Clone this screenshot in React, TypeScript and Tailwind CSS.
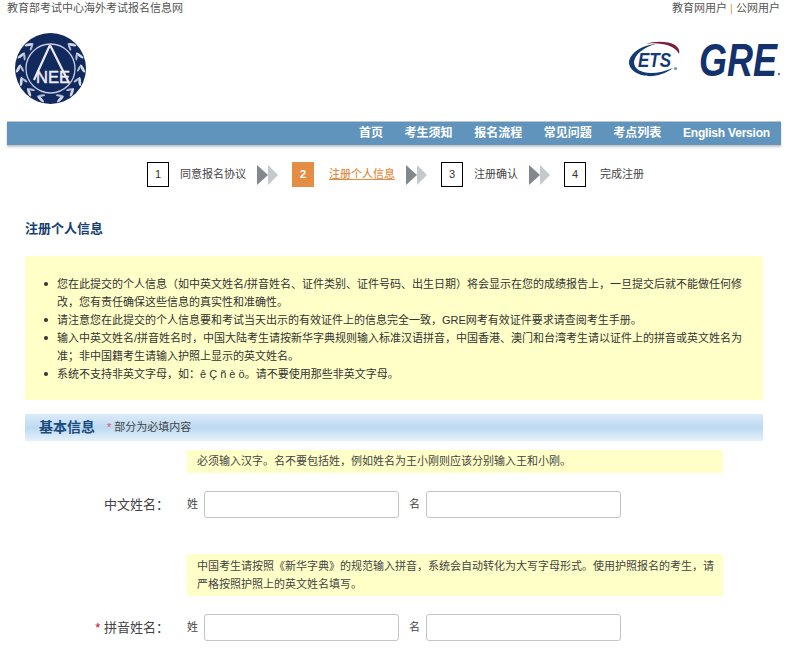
const FONT = "font-['Liberation_Sans','Noto_Sans_CJK_SC',sans-serif]";

const LAUREL = [18, 42, 66, 90, 114, 138];
const BULLET = "relative before:absolute before:top-[7px] before:left-[-13px] before:size-[4px] before:rounded-full before:bg-[#333] before:content-['']";

function NeeaLogo() {
  return (
    <svg width="71" height="71" viewBox="0 0 71 71" className="block">
      <circle cx="35.500" cy="35.500" r="35.500" fill="#12295e" />
      <circle cx="35.500" cy="35.500" r="24.500" fill="none" stroke="#c4cde0" strokeWidth="1.300" />
      {[0, 1].map((side) => (
        <g key={side} transform={side ? "translate(71 0) scale(-1 1)" : undefined}>
          {LAUREL.map((deg) => {
            const rad = (deg * Math.PI) / 180;
            const outX = 35.5 - 32 * Math.sin(rad);
            const outY = 35.5 + 32 * Math.cos(rad);
            const inX = 35.5 - 28.5 * Math.sin(rad);
            const inY = 35.5 + 28.5 * Math.cos(rad);
            return (
              <g key={deg}>
                <ellipse cx={outX} cy={outY} rx="4.500" ry="1.400" fill="#d3d9e6" transform={`rotate(${deg + 28} ${outX} ${outY})`} />
                <ellipse cx={inX} cy={inY} rx="3.500" ry="1.100" fill="#b4bed2" transform={`rotate(${deg - 28} ${inX} ${inY})`} />
              </g>
            );
          })}
        </g>
      ))}
      <path d="M35 12 L19 47 M35 12 L54 50" stroke="#e8ebf3" strokeWidth="2.200" fill="none" />
      <text x="38" y="50" textAnchor="middle" fill="#eef0f6" stroke="#eef0f6" strokeWidth="0.400" fontSize="16.500" fontFamily="Liberation Sans">NEE</text>
    </svg>
  );
}

function GreLogo() {
  return (
    <div className="flex items-start gap-[19px]">
      <svg width="52" height="36" viewBox="0 0 52 36" className="block">
        <path d="M28 3 C14 4 2 12 1 21 C1 31 14 36 25 35 C33 34 40 31 45 27 C38 30 30 32 23 32 C13 32 6 28 6 21 C7 13 16 6 28 3 Z" fill="#143a73" />
        <path d="M18 3 C26 0 40 0 47 4 C51 7 52 10 51 13 C49 8 42 4 34 3 C28 2 22 2 18 3 Z" fill="#7c1f35" />
        <text x="10" y="26" textLength="33" lengthAdjust="spacingAndGlyphs" fill="#143a73" fontSize="19.500" fontWeight="700" fontStyle="italic" fontFamily="Liberation Sans">ETS</text>
        <circle cx="47.500" cy="27.500" r="1.600" fill="#7f93b5" />
      </svg>
      <svg width="84" height="54" viewBox="0 0 84 54" className="mt-[-7px] block">
        <text x="0" y="42" textLength="78" lengthAdjust="spacingAndGlyphs" fill="#12316d" fontSize="46" fontWeight="700" fontStyle="italic" fontFamily="Liberation Sans">GRE</text>
        <circle cx="80" cy="40" r="1.200" fill="#5c769f" />
      </svg>
    </div>
  );
}

function Step({ n, label, active, last }: { n: number; label: string; active?: boolean; last?: boolean }) {
  return (
    <div className="flex items-center">
      <div className={`flex h-[25px] w-[22px] items-center justify-center text-[11px] ${active ? "bg-[#e38d45] font-bold text-white" : "border border-black text-[#333]"}`}>{n}</div>
      <span className={`text-[11px] leading-none ${active ? "ml-[15px] font-medium text-[#e38d45] underline" : last ? "ml-[14px] text-[#444]" : "ml-[11px] text-[#444]"}`}>{label}</span>
      {!last && (
        <svg width="21" height="20" viewBox="0 0 21 20" className="mr-[14px] ml-[11px] block">
          <path d="M0 0 L11 10 L0 20 Z" fill="#82888d" />
          <path d="M11 0 L21 10 L11 20 Z" fill="#c3c9ce" />
        </svg>
      )}
    </div>
  );
}

function NameRow({ label, required }: { label: string; required?: boolean }) {
  return (
    <div className="flex h-[27px] items-center text-[#444]">
      <div className="w-[144px] text-right text-[13px] leading-none">
        {required && <span className="text-[#d0021b]">* </span>}
        {label}：
      </div>
      <span className="ml-[18px] w-[17px] text-[11px]">姓</span>
      <div className="h-[27px] w-[195px] rounded-[3px] border border-[#c4c4c4] bg-white" />
      <span className="ml-[10px] w-[17px] text-[11px]">名</span>
      <div className="h-[27px] w-[195px] rounded-[3px] border border-[#c4c4c4] bg-white" />
    </div>
  );
}

export default function App() {
  return (
    <div className={`${FONT} h-[655px] w-[791px] overflow-hidden bg-white text-[11px] text-[#444]`}>
      <div className="flex h-[16px] items-center justify-between pr-[11px] pl-[7px] leading-none text-[#555]">
        <span>教育部考试中心海外考试报名信息网</span>
        <span>教育网用户 <span className="text-[#e38d45]">|</span> 公网用户</span>
      </div>

      <div className="flex h-[105px] items-start justify-between pr-[8px] pl-[15px]">
        <div className="mt-[17px]"><NeeaLogo /></div>
        <div className="mt-[25px]"><GreLogo /></div>
      </div>

      <div className="mr-[10px] ml-[7px] flex h-[24px] items-center justify-end gap-[21.600px] border-t border-[#bfc4c8] bg-[#6194bd] pr-[11px] pb-[2px] text-[12px] font-bold text-white shadow-[0_2px_2px_#c4c4c4]">
        <span>首页</span>
        <span>考生须知</span>
        <span>报名流程</span>
        <span>常见问题</span>
        <span>考点列表</span>
        <span className="tracking-[-0.2px]">English Version</span>
      </div>

      <div className="mt-[17px] flex h-[25px] items-center pl-[147px]">
        <Step n={1} label="同意报名协议" />
        <Step n={2} label="注册个人信息" active />
        <Step n={3} label="注册确认" />
        <Step n={4} label="完成注册" last />
      </div>

      <div className="mx-[25px] mt-[33px] w-[738px]">
        <h1 className="text-[13px] leading-[18px] font-bold text-[#173f70]">注册个人信息</h1>

        <div className="mt-[18px] h-[144px] bg-[#ffffc8] pt-[19px] pr-[18px] pl-[32px] text-[11px] leading-[18px] text-[#333]">
          <ul>
            <li className={BULLET}>您在此提交的个人信息（如中英文姓名/拼音姓名、证件类别、证件号码、出生日期）将会显示在您的成绩报告上，一旦提交后就不能做任何修改，您有责任确保这些信息的真实性和准确性。</li>
            <li className={BULLET}>请注意您在此提交的个人信息要和考试当天出示的有效证件上的信息完全一致，GRE网考有效证件要求请查阅考生手册。</li>
            <li className={BULLET}>输入中英文姓名/拼音姓名时，中国大陆考生请按新华字典规则输入标准汉语拼音，中国香港、澳门和台湾考生请以证件上的拼音或英文姓名为准；非中国籍考生请输入护照上显示的英文姓名。</li>
            <li className={BULLET}>系统不支持非英文字母，如：ê Ç ñ è ö。请不要使用那些非英文字母。</li>
          </ul>
        </div>

        <div className="mt-[14px] flex h-[27px] items-center bg-gradient-to-b from-[#dcebf8] via-[#bcdaf2] to-[#e5f1fb] pl-[14px]">
          <span className="text-[14px] font-bold text-[#1b4a7d]">基本信息</span>
          <span className="ml-[12px] text-[11px] text-[#444]"><span className="text-[#e8506a]">* </span>部分为必填内容</span>
        </div>

        <div className="mt-[9px] ml-[162px] flex h-[23px] w-[536px] items-center bg-[#ffffc8] pl-[10px] text-[11px] text-[#444]">
          必须输入汉字。名不要包括姓，例如姓名为王小刚则应该分别输入王和小刚。
        </div>

        <div className="mt-[18px]"><NameRow label="中文姓名" /></div>

        <div className="mt-[36px] ml-[162px] w-[536px] bg-[#ffffc8] py-[3px] pr-[8px] pl-[10px] text-[11px] leading-[18px] text-[#444]">
          中国考生请按照《新华字典》的规范输入拼音，系统会自动转化为大写字母形式。使用护照报名的考生，请严格按照护照上的英文姓名填写。
        </div>

        <div className="mt-[18px]"><NameRow label="拼音姓名" required /></div>
      </div>
    </div>
  );
}
